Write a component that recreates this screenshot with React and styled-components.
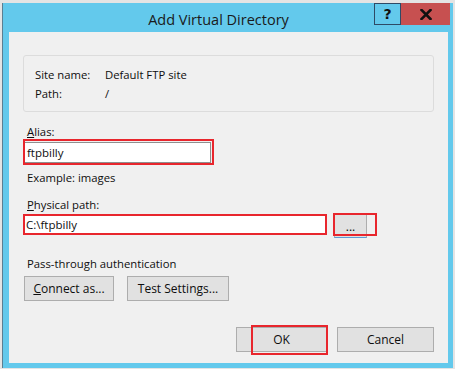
import React from "react";
import styled, { createGlobalStyle } from "styled-components";

const GlobalStyle = createGlobalStyle`
    html, body {
        margin: 0;
        padding: 0;
        background: #ffffff;
    }
    body {
        font-family: "Open Sans", "Noto Sans", sans-serif;
        font-size: 11.3px;
        color: #0e0e0e;
    }
`

const Page = styled.div`
    width: 455px;
    height: 369px;
    padding: 3px 2px 1px 2px;
    box-sizing: border-box;
    background: #e4e4e4;
`

const Window = styled.div`
    width: 451px;
    height: 365px;
    background: #63c9ec;
    display: flex;
    flex-direction: column;
    box-sizing: border-box;
    border-left: 1px solid #5b7f92;
`

const TitleBar = styled.div`
    height: 29px;
    display: flex;
    align-items: flex-start;
`

const Title = styled.div`
    flex: 1;
    text-align: center;
    font-size: 14.5px;
    line-height: 33px;
    color: #1a1a1a;
    padding-left: 60px;
`

const CaptionButton = styled.div`
    width: ${(props) => props.width || "28px"};
    height: 22px;
    display: flex;
    align-items: center;
    justify-content: center;
    background: ${(props) => props.background || "transparent"};
    border: ${(props) => props.border || "none"};
    box-sizing: border-box;
    font-family: "DejaVu Sans", sans-serif;
    font-weight: bold;
    font-size: 14px;
    color: #111;
`

const Caption = styled.div`
    display: flex;
    margin-right: 3px;
`

const Client = styled.div`
    flex: 1;
    margin: 0 5px 5px 6px;
    background: #f0f0f0;
    padding: 23px 14px 0 14px;
    display: flex;
    flex-direction: column;
`

const GroupBox = styled.div`
    height: 57px;
    box-sizing: border-box;
    border: 1px solid #dcdcdc;
    border-radius: 3px;
    padding: 9px 11px;
    display: grid;
    grid-template-columns: 70px 1fr;
    grid-auto-rows: 19px;
    align-items: center;
`

const Form = styled.div`
    display: flex;
    flex-direction: column;
    padding-left: 1px;
`

const Label = styled.div`
    line-height: 16px;
    margin-top: ${(props) => props.top || "0px"};
    padding-left: 3px;
`

const Key = styled.span`
    text-decoration: underline;
`

const Row = styled.div`
    display: flex;
    align-items: flex-start;
    gap: ${(props) => props.gap || "7px"};
    margin-top: ${(props) => props.top || "0px"};
    justify-content: ${(props) => props.justify || "flex-start"};
`

const TextBox = styled.div`
    position: relative;
    width: ${(props) => props.width};
    height: 21px;
    box-sizing: border-box;
    border: 1px solid #8f8f8f;
    background: #ffffff;
    padding-left: 2px;
    line-height: 19px;
    font-size: 11.5px;
    color: #0e0e0e;
    margin-left: ${(props) => props.left || "0px"};
`

const Highlight = styled.div`
    position: absolute;
    top: ${(props) => props.t};
    right: ${(props) => props.r};
    bottom: ${(props) => props.b};
    left: ${(props) => props.l};
    border: 2px solid #e8262d;
    pointer-events: none;
`

const Button = styled.div`
    position: relative;
    width: ${(props) => props.width};
    height: ${(props) => props.height || "25px"};
    box-sizing: border-box;
    background: #e1e1e1;
    border: 1px solid #adadad;
    border-bottom-color: ${(props) => props.bottom || "#adadad"};
    display: flex;
    align-items: center;
    justify-content: center;
    font-size: 12px;
    color: #0e0e0e;
`

const CloseIcon = () => (
    <svg width="12" height="11" viewBox="0 0 12 11">
        <path d="M1.5 1 L10.5 10 M10.5 1 L1.5 10" stroke="#111" strokeWidth="2.6" strokeLinecap="square" />
    </svg>
)

const App = () => {
    return (
        <>
            <GlobalStyle />
            <Page>
                <Window>
                    <TitleBar>
                        <Title>Add Virtual Directory</Title>
                        <Caption>
                            <CaptionButton width="27px" border="1px solid #2e4a66" background="#63c9ec">?</CaptionButton>
                            <CaptionButton width="49px" background="#c75050"><CloseIcon /></CaptionButton>
                        </Caption>
                    </TitleBar>
                    <Client>
                        <GroupBox>
                            <div>Site name:</div>
                            <div>Default FTP site</div>
                            <div>Path:</div>
                            <div>/</div>
                        </GroupBox>
                        <Form>
                            <Label top="12px"><Key>A</Key>lias:</Label>
                            <Row top="2px">
                                <TextBox width="187px">
                                    ftpbilly
                                    <Highlight t="-4px" r="-4px" b="-3px" l="-2px" />
                                </TextBox>
                            </Row>
                            <Label top="7px">Example: images</Label>
                            <Label top="11px"><Key>P</Key>hysical path:</Label>
                            <Row top="1px" gap="7px">
                                <TextBox width="304px" left="-1px">
                                    C:\ftpbilly
                                    <Highlight t="-1px" r="-1px" b="-1px" l="-1px" />
                                </TextBox>
                                <Button width="33px" height="24px" bottom="#5b9bd5">
                                    ...
                                    <Highlight t="-2px" r="-11px" b="1px" l="-2px" />
                                </Button>
                            </Row>
                            <Label top="18px">Pass-through authentication</Label>
                            <Row top="4px" gap="13px">
                                <Button width="90px"><span><Key>C</Key>onnect as...</span></Button>
                                <Button width="102px"><span>Test Settin<Key>g</Key>s...</span></Button>
                            </Row>
                            <Row top="26px" gap="10px" justify="flex-end">
                                <Button width="91px">
                                    OK
                                    <Highlight t="-3px" r="-2px" b="-4px" l="14px" />
                                </Button>
                                <Button width="97px">Cancel</Button>
                            </Row>
                        </Form>
                    </Client>
                </Window>
            </Page>
        </>
    );
};

export default App;
